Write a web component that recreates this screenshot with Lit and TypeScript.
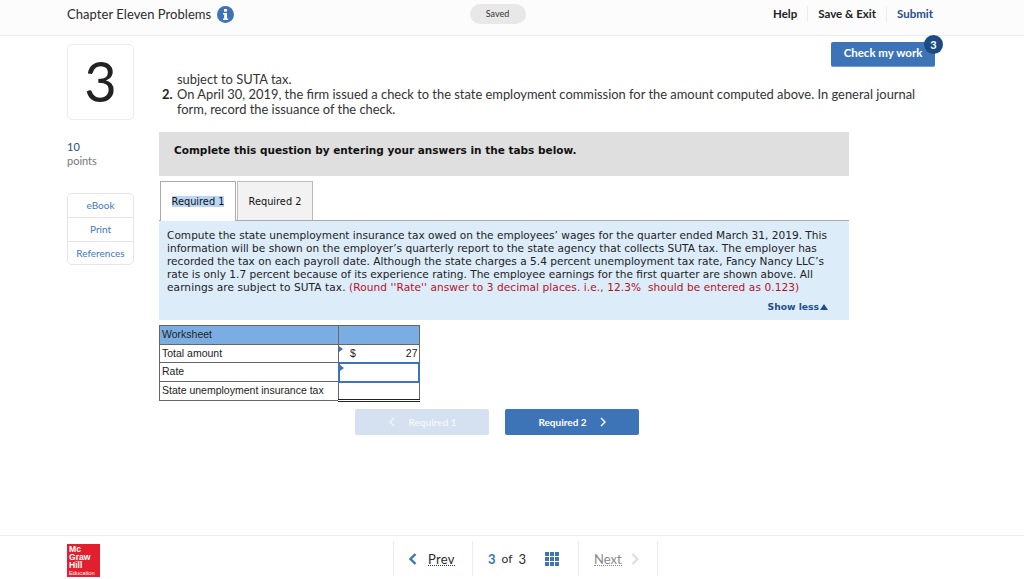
import { LitElement, html, css } from "lit";
import { customElement } from "lit/decorators.js";

@customElement("app-root")
export class AppRoot extends LitElement {
  static styles = css`
    :host { display: flex; flex-direction: column; height: 579px; width: 1024px; overflow: hidden; background: #fff; color: #2b2b2b; font-family: "Lato", "Open Sans", sans-serif; }
    * { box-sizing: border-box; }
    .hdr { height: 36px; flex: none; background: #fcfcfc; border-bottom: 1px solid #ececec; display: grid; grid-template-columns: 1fr auto 1fr; align-items: center; padding: 0 91px 7px 67px; }
    .title { display: flex; align-items: center; gap: 6px; font-size: 13px; letter-spacing: 0.05px; }
    .title svg { display: block; }
    .saved { justify-self: center; width: 56px; height: 20px; margin-left: -5px; padding-bottom: 1px; background: #e8e8e8; border-radius: 10px; font-size: 9px; font-weight: 400; display: flex; align-items: center; justify-content: center; color: #333; }
    .links { justify-self: end; display: flex; align-items: center; font-size: 11.5px; font-weight: 700; color: #222; }
    .links span { height: 16px; line-height: 16px; padding: 0 10px; border-right: 1px solid #ececec; }
    .links span:last-child { border-right: none; padding-right: 0; color: #1f4e8c; }
    .body { flex: 1; display: flex; padding-left: 67px; gap: 25px; }
    .left { width: 67px; flex: none; padding-top: 8px; }
    .qnum { height: 76px; border: 1px solid #ececec; border-radius: 5px; display: flex; align-items: center; justify-content: center; padding-bottom: 3px; font-size: 56px; font-weight: 400; color: #222; line-height: 1; }
    .pts { margin-top: 20px; font-size: 11px; line-height: 14px; color: #777; }
    .pts b { display: block; font-weight: 400; color: #1f4e8c; font-size: 11px; }
    .side { margin-top: 25px; border: 1px solid #e6e6e6; border-radius: 5px; font-size: 10px; color: #3f78c0; text-align: center; }
    .side div { height: 24px; line-height: 23px; border-bottom: 1px solid #e6e6e6; }
    .side div:last-child { border-bottom: none; height: 22px; line-height: 22px; }
    .main { width: 776px; flex: none; }
    .top { display: flex; justify-content: flex-end; padding-top: 6px; }
    .check { position: relative; width: 104px; height: 25px; padding-bottom: 3px; background: #3c74b7; border-bottom: 1px solid #6f9bd0; border-radius: 2px; color: #fff; font-size: 11.5px; font-weight: 700; display: flex; align-items: center; justify-content: center; }
    .badge { position: absolute; right: -8px; top: -7px; width: 19px; height: 19px; border-radius: 50%; background: #1c4a82; color: #fff; font-size: 11px; font-weight: 700; display: flex; align-items: center; justify-content: center; }
    .prob { margin-top: 5px; font-size: 12.9px; line-height: 15px; color: #333; white-space: nowrap; padding-left: 3px; display: grid; grid-template-columns: 15px auto; }
    .prob b { font-weight: 700; color: #222; }
    .grey { margin-top: 15px; width: 690px; height: 44px; background: #dfdfdf; padding: 11px 15px; font-family: "DejaVu Sans", Verdana, sans-serif; font-size: 10.5px; line-height: 14px; font-weight: 700; color: #111; }
    .tabs { margin-top: 5px; width: 690px; height: 40px; display: flex; gap: 1px; padding-left: 1px; border-bottom: 1px solid #aaa; font-family: "DejaVu Sans", Verdana, sans-serif; font-size: 9.8px; color: #111; }
    .tab { width: 76px; height: 39px; padding-top: 1px; border: 1px solid #bbb; border-bottom: none; background: #f2f2f2; display: flex; align-items: center; justify-content: center; }
    .tab.on { background: #fff; height: 40px; border-color: #aaa; padding-top: 0; }
    .tab.on span { background: #b9d6f5; }
    .panel { width: 690px; height: 99px; background: #dcecf9; padding: 8px 8px 0; font-family: "DejaVu Sans", Verdana, sans-serif; font-size: 10.57px; line-height: 13px; color: #222; white-space: nowrap; }
    .last { letter-spacing: 0.08px; }
    .red { color: #b5101e; }
    .less { margin-top: 6px; padding-right: 13px; display: flex; justify-content: flex-end; align-items: center; gap: 1px; font-size: 9.2px; font-weight: 700; color: #1f4e8c; line-height: 13px; }
    .less i { width: 0; height: 0; border-left: 4px solid transparent; border-right: 4px solid transparent; border-bottom: 6px solid #1f4e8c; }
    table { margin-top: 5px; width: 261px; height: 76px; border-collapse: collapse; table-layout: fixed; font-family: "Liberation Sans", Arial, sans-serif; font-size: 10.5px; color: #222; }
    td { border: 1px solid #666; padding: 0 2px 2px; position: relative; white-space: nowrap; }
    .c1 { width: 179px; }
    tr.h td { background: #7aaee3; height: 19px; }
    tr.a td { height: 18px; padding-bottom: 1px; }
    tr.b td { height: 19px; }
    tr.c td { height: 19px; }
    .amt { display: flex; justify-content: space-between; padding: 0 0 0 9px; }
    td.n { padding-right: 1px; }
    .mark { position: absolute; left: 0; top: 1px; width: 0; height: 0; border-top: 3px solid transparent; border-bottom: 3px solid transparent; border-left: 4px solid #3c74b7; }
    td.focus { border: 2px solid #3c74b7; }
    td.dbl { border-bottom: 3px double #222; border-top-color: #222; }
    .navb { margin-top: 7px; padding-left: 196px; display: flex; gap: 16px; }
    .btn { width: 134px; height: 26px; border-radius: 2px; background: #3c74b7; color: #fff; font-size: 10px; font-weight: 700; display: flex; align-items: center; justify-content: center; gap: 13px; }
    .btn.off { background: #d5e1f0; color: #f2f6fb; padding-left: 2px; }
    .ftr { flex: none; height: 44px; border-top: 1px solid #ececec; padding-left: 67px; position: relative; display: flex; }
    .logo { width: 33px; height: 33px; margin-top: 8px; background: #e21f2c; color: #fff; font-family: "Liberation Sans", Arial, sans-serif; font-weight: 700; font-size: 8.6px; line-height: 8.2px; padding: 1px 0 0 2px; }
    .logo small { display: block; font-size: 5.8px; font-weight: 400; line-height: 7px; white-space: nowrap; }
    .pager { margin: 5px 0 0 293px; height: 35px; display: flex; font-size: 13px; }
    .pg { display: flex; align-items: center; border-left: 1px solid #ececec; height: 35px; }
    .pg:last-child { border-right: 1px solid #ececec; }
    .p1 { width: 79px; padding-left: 15px; gap: 11px; }
    .p2 { width: 106px; padding-left: 15px; }
    .p3 { width: 80px; padding-left: 15px; gap: 9px; color: #888; }
    .u { border-bottom: 1px dotted #333; line-height: 12px; margin-top: 2px; letter-spacing: 0.3px; }
    .p3 .u { border-color: #888; letter-spacing: 0; }
    .cur { color: #3c74b7; font-weight: 700; }
    .of { margin: 0 6px; font-size: 12px; }
    .p2 svg { margin-left: 19px; }
    svg { display: block; flex: none; }
  `;

  render() {
    return html`
      <div class="hdr">
        <div class="title">Chapter Eleven Problems
          <svg width="17" height="17" viewBox="0 0 17 17"><circle cx="8.5" cy="8.5" r="8.5" fill="#3c74b7"/><rect x="7" y="3" width="3" height="2.6" fill="#fff"/><path d="M6 7h4v5.5h1.2V14H6v-1.5h1.2V8.5H6z" fill="#fff"/></svg>
        </div>
        <div class="saved">Saved</div>
        <div class="links"><span>Help</span><span>Save &amp; Exit</span><span>Submit</span></div>
      </div>
      <div class="body">
        <div class="left">
          <div class="qnum">3</div>
          <div class="pts"><b>10</b>points</div>
          <div class="side"><div>eBook</div><div>Print</div><div>References</div></div>
        </div>
        <div class="main">
          <div class="top"><div class="check">Check my work<span class="badge">3</span></div></div>
          <div class="prob">
            <span></span><span>subject to SUTA tax.</span>
            <b>2.</b><span>On April 30, 2019, the firm issued a check to the state employment commission for the amount computed above. In general journal<br>form, record the issuance of the check.</span>
          </div>
          <div class="grey">Complete this question by entering your answers in the tabs below.</div>
          <div class="tabs">
            <div class="tab on"><span>Required 1</span></div>
            <div class="tab">Required 2</div>
          </div>
          <div class="panel">
            Compute the state unemployment insurance tax owed on the employees’ wages for the quarter ended March 31, 2019. This<br>
            information will be shown on the employer’s quarterly report to the state agency that collects SUTA tax. The employer has<br>
            recorded the tax on each payroll date. Although the state charges a 5.4 percent unemployment tax rate, Fancy Nancy LLC’s<br>
            rate is only 1.7 percent because of its experience rating. The employee earnings for the first quarter are shown above. All<br>
            <span class="last">earnings are subject to SUTA tax. <span class="red">(Round ''Rate'' answer to 3 decimal places. i.e., 12.3%&nbsp; should be entered as 0.123)</span></span>
            <div class="less">Show less<i></i></div>
          </div>
          <table>
            <tr class="h"><td class="c1">Worksheet</td><td></td></tr>
            <tr class="a"><td>Total amount</td><td class="n"><span class="mark"></span><div class="amt"><span>$</span><span>27</span></div></td></tr>
            <tr class="b"><td>Rate</td><td class="focus"><span class="mark"></span></td></tr>
            <tr class="c"><td>State unemployment insurance tax</td><td class="dbl"></td></tr>
          </table>
          <div class="navb">
            <div class="btn off">
              <svg width="6" height="10" viewBox="0 0 6 10"><path d="M5 1L1 5l4 4" fill="none" stroke="#f2f6fb" stroke-width="1.4"/></svg>
              <span>Required 1</span>
            </div>
            <div class="btn">
              <span>Required 2</span>
              <svg width="6" height="10" viewBox="0 0 6 10"><path d="M1 1l4 4-4 4" fill="none" stroke="#fff" stroke-width="1.4"/></svg>
            </div>
          </div>
        </div>
      </div>
      <div class="ftr">
        <div class="logo">Mc<br>Graw<br>Hill<small>Education</small></div>
        <div class="pager">
          <div class="pg p1">
            <svg width="8" height="12" viewBox="0 0 8 12"><path d="M6.5 1L1.5 6l5 5" fill="none" stroke="#3c74b7" stroke-width="2.4"/></svg>
            <span class="u">Prev</span>
          </div>
          <div class="pg p2">
            <span class="cur">3</span><span class="of">of</span><span>3</span>
            <svg width="14" height="14" viewBox="0 0 14 14" fill="#3c74b7">
              <rect x="0" y="0" width="4" height="4"/><rect x="5" y="0" width="4" height="4"/><rect x="10" y="0" width="4" height="4"/>
              <rect x="0" y="5" width="4" height="4"/><rect x="5" y="5" width="4" height="4"/><rect x="10" y="5" width="4" height="4"/>
              <rect x="0" y="10" width="4" height="4"/><rect x="5" y="10" width="4" height="4"/><rect x="10" y="10" width="4" height="4"/>
            </svg>
          </div>
          <div class="pg p3">
            <span class="u">Next</span>
            <svg width="8" height="12" viewBox="0 0 8 12"><path d="M1.5 1l5 5-5 5" fill="none" stroke="#d5e1f0" stroke-width="2.2"/></svg>
          </div>
        </div>
      </div>
    `;
  }
}
